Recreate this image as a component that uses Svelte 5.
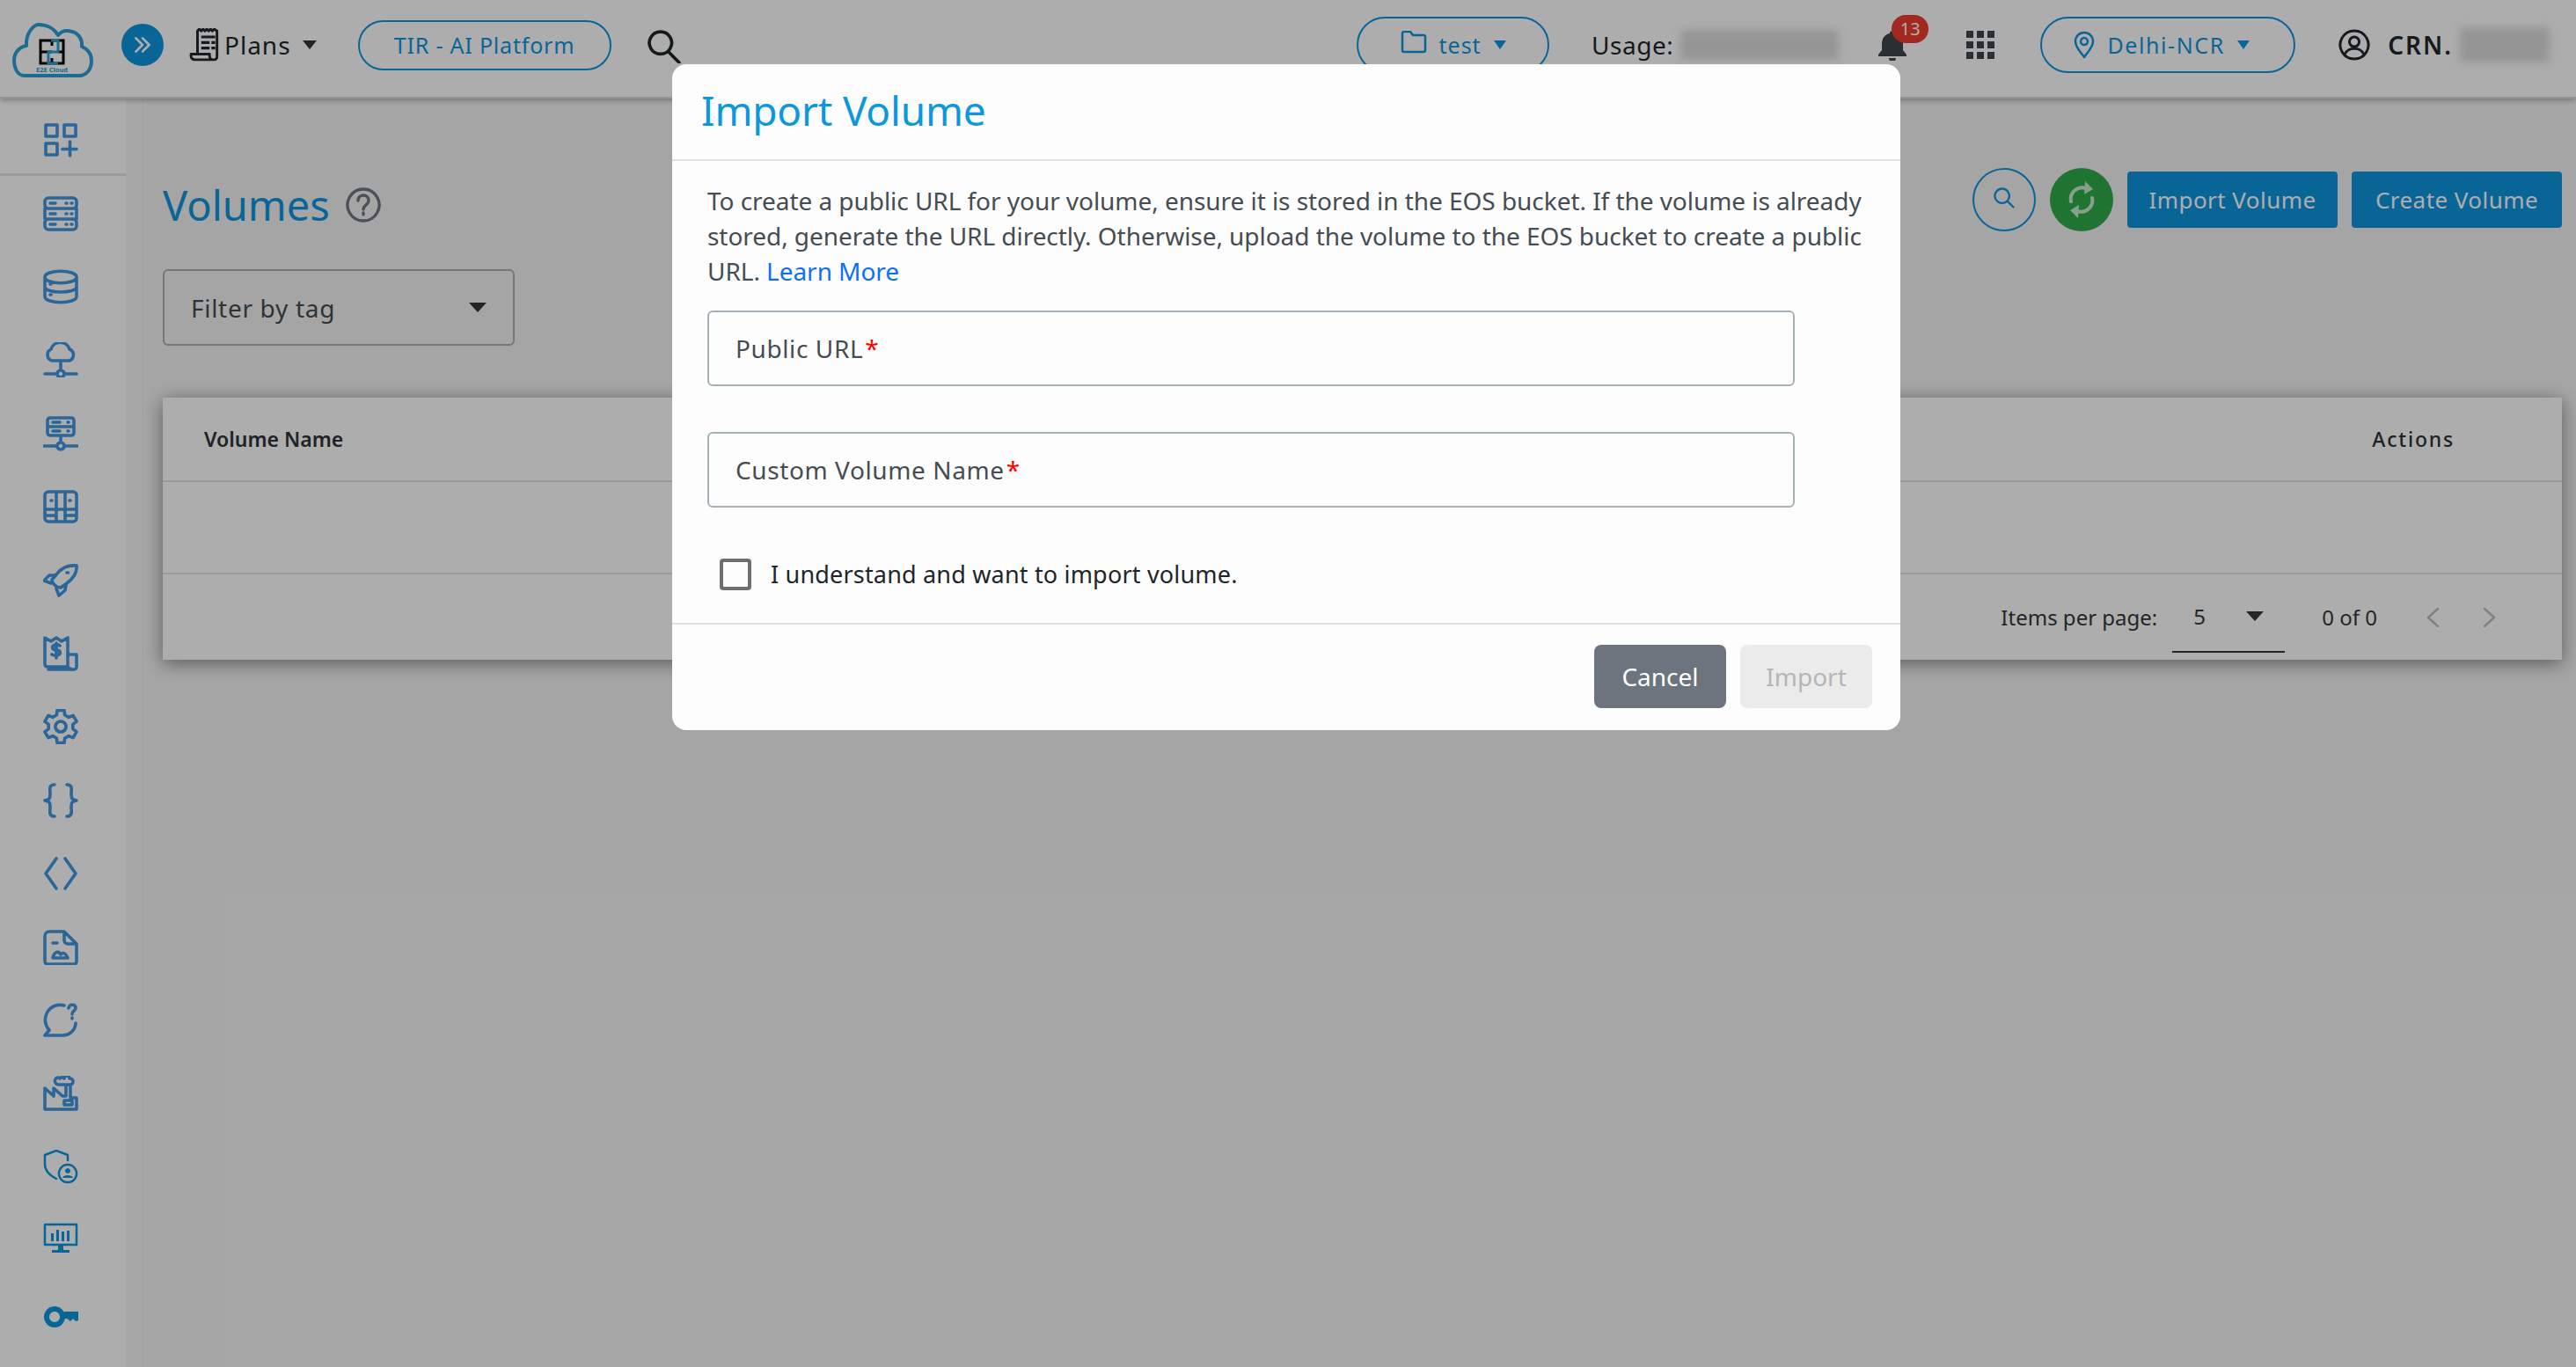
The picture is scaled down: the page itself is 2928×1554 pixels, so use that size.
<script lang="ts">
  // gear outline for the settings icon in the sidebar
  function gear_path(cx: number, cy: number, r_out: number, r_in: number, teeth: number): string {
    const parts: string[] = []
    const step = (Math.PI * 2) / teeth
    for (let i = 0; i < teeth; i++) {
      const a = i * step - Math.PI / 2
      const points = [
        [a - step * 0.2, r_out],
        [a + step * 0.2, r_out],
        [a + step * 0.32, r_in],
        [a + step * 0.68, r_in]
      ]
      for (const [angle, r] of points) {
        const x = (cx + Math.cos(angle) * r).toFixed(1)
        const y = (cy + Math.sin(angle) * r).toFixed(1)
        parts.push((parts.length ? "L" : "M") + x + " " + y)
      }
    }
    return parts.join(" ") + " Z"
  }

  const side_icons = [
    { name: "dashboard", d: "M3 3h13v13H3z M24 3h13v13H24z M3 24h13v13H3z M30.5 22v16 M22 30.5h16" },
    { name: "nodes", d: "M6 2h28a4 4 0 0 1 4 4v4a4 4 0 0 1-4 4H6a4 4 0 0 1-4-4V6a4 4 0 0 1 4-4z M2 14v12 M38 14v12 M2 14h36 M2 26h36 M6 38h28a4 4 0 0 0 4-4v-4a4 4 0 0 0-4-4H6a4 4 0 0 0-4 4v4a4 4 0 0 0 4 4z M8 8h6 M8 20h6 M8 32h6 M26 8h1 M32 8h1 M26 20h1 M32 20h1 M26 32h1 M32 32h1" },
    { name: "database", d: "M2 9c0-9 36-9 36 0s-36 9-36 0z M2 9v22c0 9 36 9 36 0V9 M2 20c0 8 36 8 36 0 M8 17h1 M8 29h1" },
    { name: "cloud-net", d: "M10 21a7 7 0 0 1-1-13 11 11 0 0 1 21 0 7 7 0 0 1 0 13z M20 21v11 M2 36h14 M24 36h14 M20 32a4 4 0 1 0 .01 0z" },
    { name: "server-net", d: "M8 2h24a3 3 0 0 1 3 3v14a3 3 0 0 1-3 3H8a3 3 0 0 1-3-3V5a3 3 0 0 1 3-3z M5 12h30 M11 7h8 M11 17h8 M28 7h1 M28 17h1 M20 22v8 M1 34h14 M25 34h14 M20 30a4 4 0 1 0 .01 0z" },
    { name: "table", d: "M6 3h28a4 4 0 0 1 4 4v26a4 4 0 0 1-4 4H6a4 4 0 0 1-4-4V7a4 4 0 0 1 4-4z M15 3v34 M25 3v34 M2 23h36 M2 30h13 M25 30h13 M9 13h1 M30 13h1" },
    { name: "rocket", d: "M38 3c-11-1-18 4-22 9l-6 7c0 4 5 9 10 9l7-5c8-6 12-12 11-20z M13 14l-6 0-6 6 8 3 M26 25l-1 6-7 6-3-8 M27 11h1.500" },
    { name: "billing", d: "M2 2l7 4 6-4 6 4 7-4v33H5a3 3 0 0 1-3-3z M28 21h10v14a3 3 0 0 1-3 3H6 M28 35a3 3 0 0 0 3 2 M19 11a5 3 0 0 0-5-1c-5 1-4 6 1 6s6 5 1 6a6 3 0 0 1-6-1 M15 8v17" },
    { name: "settings", d: gear_path(20, 20, 19, 14, 6) + " M20 14a6 6 0 1 0 .01 0z" },
    { name: "api", d: "M13 2c-7 0-5 6-5 11s-1 6-6 7c5 1 6 2 6 7s-2 11 5 11 M27 2c7 0 5 6 5 11s1 6 6 7c-5 1-6 2-6 7s2 11-5 11" },
    { name: "code", d: "M15 3L3 20l12 17 M25 3l12 17-12 17" },
    { name: "image-file", d: "M7 2h17l14 14v20a3 3 0 0 1-3 3H5a3 3 0 0 1-3-3V7a5 5 0 0 1 5-5z M24 2v10a4 4 0 0 0 4 4h10 M11 15h5 M11 32c2-8 7-8 9-4 2-2 5-3 8 4z" },
    { name: "support", d: "M24 3a17 17 0 0 0-17 28L2 37h20c9 0 15-7 15-14 M29 6c1-5 8-5 8 0 0 3-4 3-4 7 M33 17v1" },
    { name: "factory", d: "M2 38V14l10 9V14l10 9h4V10h5v15h7v13z M14 4a3 3 0 0 1 5-1 3 3 0 0 1 5 0 3 3 0 0 1 6 0 3 3 0 0 1 1 7H17a4 4 0 0 1-3-6z M24 28h9v5h-9z" },
    { name: "shield", dark: true, d: "M2 6l13-5 13 5v6 M2 6v10c0 8 5 13 13 17 M28 17a10 10 0 1 0 .01 0z", fill: "M28 21a3 3 0 1 1-.01 0z M22 32c1-4 11-4 12 0z" },
    { name: "monitor", dark: true, d: "M2 2h36v23H2z", fill: "M9 12h3v9H9z M15 8h3v13h-3z M21 10h3v11h-3z M27 9h3v12h-3z M17 25h6v6h-6z M10 31h20v3H10z" },
    { name: "key", dark: true, d: "M13 11a9 9 0 1 0 .01 0z", stroke_wide: true, fill: "M24 14h16v10l-3 1-3-3-3 3-4-3h-3z" }
  ]
</script>


<div class="page">
  <header class="topbar">
    <svg class="logo" viewBox="0 0 92 62">
      <path class="logo-cloud" d="M14 60C5 60 2 50 2 43C2 33 9 27 16 26C15 12 24 2 30 2C40 2 48 7 52 14C56 9 62 8 68 10C76 12 80 20 79 27C86 30 90 36 90 43C90 53 84 60 76 60Z" />
      <path class="logo-grid" d="M32 20h26v26H32z M45 20v6 M32 33h13 M45 40v6 M58 33h-6" />
      <path class="logo-blue" d="M44 20h8v13H41v13h11" />
      <text x="45" y="56" class="logo-text">E2E Cloud</text>
    </svg>

    <button class="toggle" aria-label="Expand menu">
      <svg viewBox="0 0 24 24"><path d="M5 5l7 7-7 7 M12 5l7 7-7 7" /></svg>
    </button>

    <div class="plans">
      <svg class="plans-icon" viewBox="0 0 36 36">
        <path d="M9 28V3l2-2 2 2 2-2 2 2 2-2 2 2 2-2 2 2 2-2 3 2v28a3 3 0 0 1-3 3H8 M2 28h20v2a4 4 0 0 0 4 4H6a4 4 0 0 1-4-4z" />
        <path class="solid" d="M13 8h15v3H13z M13 14h9v3h-9z M24 14h4v3h-4z M13 20h9v3h-9z M24 20h4v3h-4z" />
      </svg>
      <span>Plans</span>
      <i class="caret"></i>
    </div>

    <div class="pill tir">TIR - AI Platform</div>

    <svg class="top-search" viewBox="0 0 36 36">
      <path d="M14 2a12 12 0 1 0 .01 0z M22 23l12 12" />
    </svg>

    <div class="spacer"></div>

    <div class="pill project">
      <svg viewBox="0 0 30 26"><path d="M2 3a2 2 0 0 1 2-2h7l3 4h12a2 2 0 0 1 2 2v15a2 2 0 0 1-2 2H4a2 2 0 0 1-2-2z" /></svg>
      <span>test</span>
      <i class="caret small"></i>
    </div>

    <span class="usage">Usage:</span>
    <div class="blurred usage-value"></div>

    <div class="bell">
      <svg viewBox="0 0 36 36"><path d="M18 2a3 3 0 0 1 3 3c6 1 9 6 9 12v7l4 5v2H2v-2l4-5v-7c0-6 3-11 9-12a3 3 0 0 1 3-3z M14 33h8a4 4 0 0 1-8 0z" /></svg>
      <span class="badge">13</span>
    </div>

    <div class="apps">
      {#each Array(9) as _}
        <i></i>
      {/each}
    </div>

    <div class="pill region">
      <svg viewBox="0 0 24 32"><path d="M12 2a10 10 0 0 0-10 10c0 7 6 12 10 18 4-6 10-11 10-18A10 10 0 0 0 12 2z M12 8a4 4 0 1 0 .01 0z" /></svg>
      <span>Delhi-NCR</span>
      <i class="caret small"></i>
    </div>

    <svg class="user" viewBox="0 0 36 36">
      <path d="M18 2a16 16 0 1 0 .01 0z M18 9a5.500 5.500 0 1 0 .01 0z M7 29c3-9 19-9 22 0" />
    </svg>
    <span class="crn">CRN.</span>
    <div class="blurred crn-value"></div>
  </header>

  <div class="body">
    <nav class="sidebar">
      {#each side_icons as icon, i}
        <div class="side-item" class:first={i === 0}>
          <svg class:dark={icon.dark} class:wide={icon.stroke_wide} viewBox="0 0 40 40">
            <path d={icon.d} />
            {#if icon.fill}
              <path class="solid" d={icon.fill} />
            {/if}
          </svg>
        </div>
      {/each}
    </nav>
    <div class="strip"></div>

    <main class="content">
      <div class="title-row">
        <h1>Volumes</h1>
        <svg class="help" viewBox="0 0 40 40">
          <path d="M20 2a18 18 0 1 0 .01 0z M14 15c0-8 12-8 12 0 0 5-6 5-6 10 M20 29v2" />
        </svg>
        <div class="spacer"></div>
        <div class="page-actions">
          <button class="round search" aria-label="Search">
            <svg viewBox="0 0 24 24"><path d="M10 3a7 7 0 1 0 .01 0z M15 15l6 6" /></svg>
          </button>
          <button class="round refresh" aria-label="Refresh">
            <svg viewBox="0 0 40 44">
              <path d="M8 24a13 13 0 0 1 17-15 M32 20a13 13 0 0 1-17 15" />
              <path class="solid" d="M24 1l9 9-10 6z M16 43l-9-9 10-6z" />
            </svg>
          </button>
          <button class="primary">Import Volume</button>
          <button class="primary">Create Volume</button>
        </div>
      </div>

      <div class="filter">
        <span>Filter by tag</span>
        <i class="caret"></i>
      </div>

      <section class="card">
        <div class="row head">
          <span class="volume-name">Volume Name</span>
          <span class="actions">Actions</span>
        </div>
        <div class="row empty"></div>
        <div class="row paginator">
          <span>Items per page:</span>
          <div class="page-size">
            <span>5</span>
            <i class="caret"></i>
          </div>
          <span class="range">0 of 0</span>
          <svg viewBox="0 0 16 24"><path d="M14 2L3 12l11 10" /></svg>
          <svg viewBox="0 0 16 24"><path d="M2 2l11 10L2 22" /></svg>
        </div>
      </section>
    </main>
  </div>

  <div class="backdrop">
    <div class="modal">
      <div class="modal-head">
        <h2>Import Volume</h2>
      </div>
      <div class="modal-body">
        <p>To create a public URL for your volume, ensure it is stored in the EOS bucket. If the volume is already stored, generate the URL directly. Otherwise, upload the volume to the EOS bucket to create a public URL. <a href="#learn">Learn More</a></p>
        <div class="field">Public URL<em>*</em></div>
        <div class="field">Custom Volume Name<em>*</em></div>
        <label class="check">
          <i class="box"></i>
          <span>I understand and want to import volume.</span>
        </label>
      </div>
      <div class="modal-foot">
        <button class="cancel">Cancel</button>
        <button class="import" disabled>Import</button>
      </div>
    </div>
  </div>
</div>


<style>
  :global(body) {
    margin: 0;
    background: #f4f4f4;
    font-family: "Noto Sans", "Open Sans", sans-serif;
    color: #3d4349;
  }


  .page {
    position: relative;
    width: 2928px;
    height: 1554px;
    overflow: hidden;
    display: flex;
    flex-direction: column;
  }


  svg {
    display: block;
    fill: none;
    stroke: currentColor;
    stroke-linecap: round;
    stroke-linejoin: round;
  }


  .solid {
    fill: currentColor;
    stroke: none;
  }


  button {
    font-family: inherit;
    border: none;
    padding: 0;
  }


  .caret {
    display: block;
    width: 0;
    height: 0;
    border-left: 10px solid transparent;
    border-right: 10px solid transparent;
    border-top: 11px solid #33383d;
  }


  .caret.small {
    border-left-width: 7px;
    border-right-width: 7px;
    border-top-width: 10px;
    border-top-color: #0f96df;
  }


  .spacer {
    flex: 1;
  }


  /* top bar */

  .topbar {
    height: 112px;
    flex: none;
    box-sizing: border-box;
    display: flex;
    align-items: center;
    background: #fff;
    border-bottom: 2px solid #dcdcdc;
    box-shadow: 0 2px 6px rgba(0, 0, 0, 0.3);
    padding: 0 30px 8px 14px;
    position: relative;
    z-index: 1;
    font-size: 28px;
    letter-spacing: 1px;
    color: #22272b;
  }


  .logo {
    width: 92px;
    height: 62px;
    stroke: none;
    margin-top: 12px;
  }


  .logo-cloud {
    stroke: #2b9fd6;
    stroke-width: 4;
    fill: none;
  }


  .logo-grid {
    stroke: #000;
    stroke-width: 3;
    stroke-linecap: butt;
    stroke-linejoin: miter;
  }


  .logo-blue {
    stroke: #2b9fd6;
    stroke-width: 3;
    stroke-linecap: butt;
    stroke-linejoin: miter;
  }


  .logo-text {
    font-size: 7.500px;
    font-weight: 700;
    letter-spacing: 0;
    fill: #2b9fd6;
    stroke: none;
    text-anchor: middle;
  }


  .toggle {
    width: 48px;
    height: 48px;
    border-radius: 50%;
    background: #0f96df;
    color: #fff;
    margin-left: 32px;
    display: flex;
    align-items: center;
    justify-content: center;
  }


  .toggle svg {
    width: 26px;
    height: 26px;
    stroke-width: 2.500;
  }


  .plans {
    display: flex;
    align-items: center;
    margin-left: 29px;
    color: #22272b;
  }


  .plans-icon {
    width: 38px;
    height: 38px;
    stroke-width: 2.800;
    margin-right: 2px;
  }


  .plans .caret {
    margin-left: 13px;
    border-left-width: 8px;
    border-right-width: 8px;
    border-top-width: 10px;
  }


  .pill {
    box-sizing: border-box;
    display: flex;
    align-items: center;
    justify-content: center;
    border: 2px solid #0f96df;
    border-radius: 32px;
    color: #0f96df;
    font-size: 25px;
    letter-spacing: 0.800px;
  }


  .tir {
    width: 288px;
    height: 57px;
    margin-left: 47px;
  }


  .top-search {
    width: 38px;
    height: 38px;
    stroke-width: 3.500;
    margin-left: 41px;
    margin-top: 3px;
    color: #22272b;
  }


  .project {
    width: 219px;
    height: 64px;
    gap: 14px;
    letter-spacing: 1px;
  }


  .project svg {
    width: 30px;
    height: 26px;
    stroke-width: 2.500;
    margin-bottom: 6px;
  }


  .usage {
    margin-left: 48px;
    letter-spacing: 0.500px;
  }


  .blurred {
    background: #dcdcdc;
    filter: blur(5px);
  }


  .usage-value {
    width: 180px;
    height: 34px;
    margin-left: 8px;
  }


  .bell {
    position: relative;
    margin-left: 43px;
    width: 36px;
    height: 36px;
  }


  .bell svg {
    width: 36px;
    height: 36px;
    fill: #3f464c;
    stroke: none;
    color: #3f464c;
  }


  .badge {
    position: absolute;
    left: 17px;
    top: -16px;
    width: 42px;
    height: 32px;
    border-radius: 16px;
    background: #ef3d2f;
    color: #fff;
    font-size: 20px;
    letter-spacing: 0;
    text-align: center;
    line-height: 31px;
  }


  .apps {
    display: grid;
    grid-template-columns: repeat(3, 8px);
    grid-template-rows: repeat(3, 8px);
    gap: 4px;
    margin-left: 66px;
  }


  .apps i {
    background: #3f464c;
  }


  .region {
    width: 290px;
    height: 64px;
    margin-left: 52px;
    gap: 14px;
    padding-right: 14px;
    letter-spacing: 1.600px;
  }


  .region svg {
    width: 24px;
    height: 32px;
    stroke-width: 2.500;
  }


  .user {
    width: 36px;
    height: 36px;
    stroke-width: 3;
    margin-left: 49px;
    color: #22272b;
  }


  .crn {
    margin-left: 20px;
    font-weight: 600;
    letter-spacing: 2px;
    font-size: 28px;
  }


  .crn-value {
    width: 102px;
    height: 40px;
    margin-left: 8px;
  }


  /* sidebar */

  .body {
    flex: 1;
    display: flex;
    min-height: 0;
  }


  .sidebar {
    width: 143px;
    flex: none;
    background: #fff;
    display: flex;
    flex-direction: column;
  }


  .side-item {
    height: 83.400px;
    flex: none;
    display: flex;
    align-items: center;
    justify-content: center;
    color: #4296e1;
    padding-right: 6px;
  }


  .side-item.first {
    height: 77px;
    padding-top: 8px;
    margin-bottom: 1px;
    border-bottom: 3px solid #e4e4e4;
  }


  .side-item:last-child {
    margin-top: 3px;
  }


  .side-item svg {
    width: 40px;
    height: 40px;
    stroke-width: 3.600;
  }


  .side-item svg.dark {
    color: #0f96df;
    stroke-width: 2.500;
  }


  .side-item svg.wide {
    stroke-width: 6;
  }


  .strip {
    width: 20px;
    flex: none;
    background: #f6f6f6;
    border-right: 2px solid #f0f0f0;
    box-sizing: border-box;
  }


  /* page content */

  .content {
    flex: 1;
    min-width: 0;
    box-sizing: border-box;
    padding: 83px 16px 0 22px;
  }


  .title-row {
    display: flex;
    align-items: center;
    height: 76px;
  }


  .page-actions {
    display: flex;
    align-items: center;
    margin-bottom: 12px;
  }


  h1 {
    margin: 0;
    font-size: 47px;
    font-weight: 400;
    color: #0f96df;
  }


  .help {
    width: 40px;
    height: 40px;
    stroke-width: 3.400;
    margin-left: 18px;
    color: #6f7880;
  }


  .round {
    width: 72px;
    height: 72px;
    border-radius: 50%;
    display: flex;
    align-items: center;
    justify-content: center;
    margin-right: 16px;
  }


  .round.search {
    box-sizing: border-box;
    background: transparent;
    border: 2px solid #0f96df;
    color: #0f96df;
    padding-bottom: 4px;
  }


  .round.search svg {
    width: 28px;
    height: 28px;
    stroke-width: 2;
  }


  .round.refresh {
    background: #2dac47;
    color: #fff;
  }


  .round.refresh svg {
    width: 40px;
    height: 44px;
    stroke-width: 4;
    opacity: 0.75;
  }


  .primary {
    width: 239px;
    height: 64px;
    background: #0f96df;
    color: #fff;
    font-size: 26px;
    letter-spacing: 0.450px;
    border-radius: 4px;
    margin-right: 16px;
  }


  .primary:last-child {
    margin-right: 0;
  }


  .filter {
    box-sizing: border-box;
    width: 400px;
    height: 87px;
    margin-top: 35px;
    display: flex;
    align-items: center;
    justify-content: space-between;
    padding: 0 30px 0 30px;
    border: 2px solid #a4b2b8;
    border-radius: 6px;
    font-size: 28px;
    letter-spacing: 0.700px;
    color: #454c52;
  }


  .card {
    margin-top: 59px;
    background: #fff;
    box-shadow: 0 4px 20px rgba(0, 0, 0, 0.45);
  }


  .row {
    display: flex;
    align-items: center;
    box-sizing: border-box;
  }


  .head {
    height: 96px;
    justify-content: space-between;
    padding: 0 122px 0 47px;
    border-bottom: 2px solid #e4e4e4;
    color: #2e3338;
  }


  .volume-name {
    font-size: 23px;
    font-weight: 600;
  }


  .actions {
    font-size: 23px;
    font-weight: 500;
    letter-spacing: 1.800px;
  }


  .empty {
    height: 105px;
    border-bottom: 2px solid #e4e4e4;
  }


  .paginator {
    height: 97px;
    justify-content: flex-end;
    padding: 0 74px 0 0;
    font-size: 24px;
    color: #33383d;
  }


  .page-size {
    box-sizing: border-box;
    width: 128px;
    height: 68px;
    margin: 12px 0 0 17px;
    padding: 0 24px 12px 24px;
    display: flex;
    align-items: center;
    justify-content: space-between;
    border-bottom: 2px solid #33383d;
  }


  .range {
    margin: 0 55px 0 42px;
  }


  .paginator svg {
    width: 16px;
    height: 24px;
    stroke-width: 2.500;
    color: #bfbfbf;
  }


  .paginator svg:last-child {
    margin-left: 49px;
  }


  /* import dialog */

  .backdrop {
    position: absolute;
    inset: 0;
    z-index: 5;
    background: rgba(0, 0, 0, 0.32);
    display: flex;
    justify-content: center;
    align-items: flex-start;
    padding: 73px 4px 0 0;
    box-sizing: border-box;
  }


  .modal {
    width: 1396px;
    height: 757px;
    background: #fdfdfe;
    border-radius: 16px;
    display: flex;
    flex-direction: column;
    overflow: hidden;
  }


  .modal-head {
    height: 110px;
    flex: none;
    box-sizing: border-box;
    padding: 0 0 4px 33px;
    display: flex;
    align-items: center;
    border-bottom: 2px solid #dee2e6;
  }


  h2 {
    margin: 0;
    font-size: 46px;
    font-weight: 400;
    letter-spacing: -0.200px;
    color: #0d97dd;
  }


  .modal-body {
    height: 527px;
    flex: none;
    box-sizing: border-box;
    padding: 25px 30px 0 40px;
    border-bottom: 2px solid #dee2e6;
  }


  p {
    margin: 0;
    font-size: 28px;
    line-height: 40px;
    letter-spacing: -0.050px;
    color: #454c52;
  }


  a {
    color: #0d6efd;
    text-decoration: none;
  }


  .field {
    box-sizing: border-box;
    width: 1236px;
    height: 86px;
    margin: 25px 0 52px;
    padding: 0 30px;
    display: flex;
    align-items: center;
    border: 2px solid #a4b2b8;
    border-radius: 6px;
    font-size: 28px;
    letter-spacing: 0.600px;
    color: #454c52;
  }


  .field + .field {
    margin-top: 0;
    margin-bottom: 0;
  }


  em {
    color: #ff0000;
    font-style: normal;
    margin-left: 2px;
  }


  .check {
    display: flex;
    align-items: center;
    gap: 22px;
    margin: 57px 0 0 14px;
    font-size: 27px;
    letter-spacing: 0.180px;
    color: #212529;
  }


  .box {
    box-sizing: border-box;
    width: 36px;
    height: 36px;
    border: 4px solid #6e6e6e;
    border-radius: 4px;
  }


  .modal-foot {
    flex: 1;
    display: flex;
    justify-content: flex-end;
    gap: 16px;
    padding: 23px 32px 0 0;
  }


  .modal-foot button {
    width: 150px;
    height: 72px;
    border-radius: 8px;
    font-size: 28px;
    letter-spacing: 0;
  }


  .cancel {
    background: #6c757d;
    color: #fff;
  }


  .import {
    background: #ebebeb;
    color: #b5b5b5;
  }
</style>
